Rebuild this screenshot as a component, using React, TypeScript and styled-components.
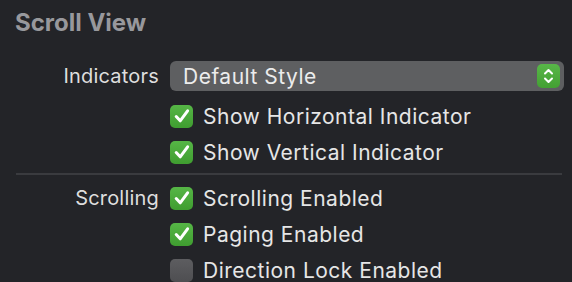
import React from "react";
import styled, { createGlobalStyle } from "styled-components";

const Global = createGlobalStyle`
  html, body { margin: 0; padding: 0; background: #232428; }
  body { font-family: Inter, "Open Sans", "Liberation Sans", sans-serif; -webkit-font-smoothing: antialiased; }
`;

const Panel = styled.div`
  width: 572px;
  height: 282px;
  overflow: hidden;
  background: #232428;
  box-sizing: border-box;
`;

const Header = styled.div`
  height: 44px;
  display: flex;
  align-items: center;
  padding-left: 15px;
  font-size: 24px;
  font-weight: 700;
  color: #98989c;
`;

const Section = styled.div<{ $top: number }>`
  display: grid;
  grid-template-columns: 159px 1fr;
  column-gap: 11px;
  padding-top: ${(p) => p.$top}px;
  padding-right: 8px;
`;

const Label = styled.div<{ $h: number }>`
  height: ${(p) => p.$h}px;
  display: flex;
  align-items: center;
  justify-content: flex-end;
  font-size: 20px;
  letter-spacing: 0.2px;
  color: #dedede;
`;

const Cell = styled.div<{ $h: number }>`
  height: ${(p) => p.$h}px;
  display: flex;
  align-items: center;
`;

const Popup = styled.div`
  flex: 1;
  height: 30px;
  border-radius: 6px;
  background: #5e5f61;
  display: flex;
  align-items: center;
  justify-content: space-between;
  padding: 0 4px 0 13px;
  box-sizing: border-box;
  font-size: 21px;
  letter-spacing: 0.5px;
  color: #ececec;
`;

const Stepper = styled.div`
  width: 23px;
  height: 24px;
  border-radius: 5px;
  background: linear-gradient(#58b748, #43a033);
  display: flex;
  align-items: center;
  justify-content: center;
`;

const Box = styled.div<{ $on: boolean }>`
  width: 23px;
  height: 23px;
  border-radius: 5px;
  box-sizing: border-box;
  background: ${(p) =>
    p.$on ? "linear-gradient(#56b646, #3f9d30)" : "linear-gradient(#5d5d60, #4e4e51)"};
  display: flex;
  align-items: center;
  justify-content: center;
  flex-shrink: 0;
`;

const CheckText = styled.span`
  margin-left: 10px;
  font-size: 21px;
  letter-spacing: 0.5px;
  color: #e6e6e6;
`;

const Divider = styled.div`
  height: 2px;
  background: #3a3b3f;
  margin: 3px 10px 5px 16px;
`;

const Check = ({ on, label }: { on: boolean; label: string }) => (
  <>
    <Box $on={on}>
      {on && (
        <svg width="18" height="18" viewBox="0 0 18 18">
          <path d="M3.2 9.5 L7.2 13.8 L14.6 3.8" fill="none" stroke="#fff" strokeWidth="3" strokeLinecap="round" strokeLinejoin="round" />
        </svg>
      )}
    </Box>
    <CheckText>{label}</CheckText>
  </>
);

export default function App() {
  return (
    <Panel>
      <Global />
      <Header>Scroll View</Header>
      <Section $top={17}>
        <Label $h={30}>Indicators</Label>
        <Cell $h={30}>
          <Popup>
            <span>Default Style</span>
            <Stepper>
              <svg width="13" height="18" viewBox="0 0 13 18">
                <path d="M3 6.5 L6.5 3 L10 6.5 M3 11.5 L6.5 15 L10 11.5" fill="none" stroke="#fff" strokeWidth="2" strokeLinecap="round" strokeLinejoin="round" />
              </svg>
            </Stepper>
          </Popup>
        </Cell>
      </Section>
      <Section $top={7}>
        <Label $h={36} />
        <Cell $h={36}><Check on label="Show Horizontal Indicator" /></Cell>
        <Label $h={36} />
        <Cell $h={36}><Check on label="Show Vertical Indicator" /></Cell>
      </Section>
      <Divider />
      <Section $top={0}>
        <Label $h={36}>Scrolling</Label>
        <Cell $h={36}><Check on label="Scrolling Enabled" /></Cell>
        <Label $h={36} />
        <Cell $h={36}><Check on label="Paging Enabled" /></Cell>
        <Label $h={36} />
        <Cell $h={36}><Check on={false} label="Direction Lock Enabled" /></Cell>
      </Section>
    </Panel>
  );
}
